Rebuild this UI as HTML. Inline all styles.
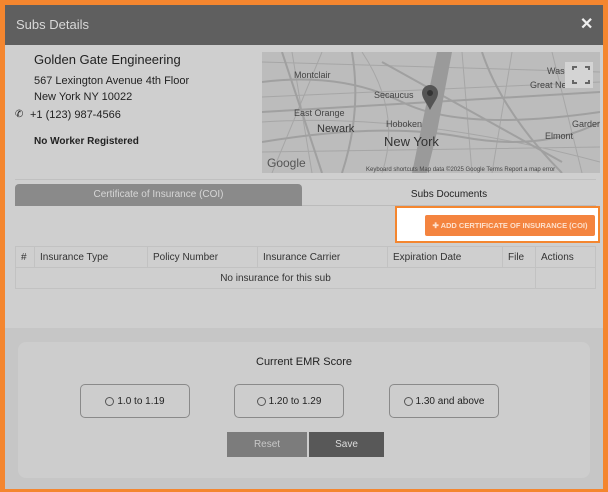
<!DOCTYPE html>
<html><head><meta charset="utf-8"><style>
*{box-sizing:border-box;margin:0;padding:0}
body{width:608px;height:492px;background:#f4862f;font-family:"Liberation Sans",sans-serif;position:relative;overflow:hidden}
.a{position:absolute}
.win{left:5px;top:5px;width:598px;height:484px;background:#cfcfcf}
.hdr{left:5px;top:5px;width:598px;height:40px;background:#5f5f5f;color:#d8d8d8;font-size:13px;padding:12px 0 0 11px}
.t{color:#222}
table{border-collapse:collapse;font-size:10px;color:#333}
td{border:1px solid #c2c2c2;height:21px;padding:0 5px}
.rb{border:1px solid #8a8a8a;border-radius:5px;font-size:10px;color:#222;display:flex;align-items:center;justify-content:center}
.rb span{display:inline-block;width:9px;height:9px;border:1px solid #555;border-radius:50%;margin-right:3px}
</style></head><body>
<div class="a win"></div>
<div class="a hdr">Subs Details</div>
<div class="a" style="left:580px;top:14px;color:#eee;font-size:16px;font-weight:bold">✕</div>
<div class="a t" style="left:34px;top:52px;font-size:13px">Golden Gate Engineering</div>
<div class="a t" style="left:34px;top:73px;font-size:11px;line-height:16px">567 Lexington Avenue 4th Floor<br>New York NY 10022</div>
<div class="a t" style="left:15px;top:109px;font-size:10px">✆</div>
<div class="a t" style="left:30px;top:109px;font-size:11px">+1 (123) 987-4566</div>
<div class="a t" style="left:34px;top:136px;font-size:10px;font-weight:bold">No Worker Registered</div>
<svg class="a" style="left:262px;top:52px" width="338" height="121" viewBox="0 0 338 121">
<rect width="338" height="121" fill="#bcbcbc"/>
<g stroke="#a6a6a6" stroke-width="1" fill="none">
<path d="M0 10 L338 20M0 45 L338 30M0 100 L338 95M30 0 L50 121M250 0 L230 121M290 0 L320 121M0 70 Q150 60 338 110M100 0 Q140 60 120 121M200 0 L210 121M60 0 L10 121"/></g>
<g stroke="#a0a0a0" stroke-width="2" fill="none">
<path d="M0 30 Q80 20 140 50 T338 60"/><path d="M20 0 L60 121"/><path d="M90 0 Q100 60 80 121"/><path d="M220 0 Q240 60 300 121"/><path d="M0 90 Q120 70 200 85 T338 70"/><path d="M120 10 L300 110"/><path d="M0 60 L338 40"/></g>
<path d="M175 0 L190 0 L175 80 L165 121 L150 121 Z" fill="#9a9a9a"/>
<g font-size="9" fill="#444"><text x="32" y="26">Montclair</text><text x="32" y="64">East Orange</text><text x="112" y="46">Secaucus</text><text x="124" y="75">Hoboken</text><text x="55" y="80" font-size="11" fill="#333">Newark</text><text x="122" y="94" font-size="13" fill="#333">New York</text><text x="285" y="22">Washi</text><text x="268" y="36">Great Neck</text><text x="283" y="87">Elmont</text><text x="310" y="75">Garden</text><text x="5" y="115" font-size="12" fill="#555">Google</text><text x="104" y="119" font-size="6">Keyboard shortcuts   Map data ©2025 Google   Terms   Report a map error</text></g>
<path d="M168 58 C164 50 160 46 160 41 A8 8 0 1 1 176 41 C176 46 172 50 168 58Z" fill="#555"/>
<circle cx="168" cy="41" r="3" fill="#333"/>
<rect x="303" y="10" width="28" height="26" fill="#d4d4d4"/>
<path d="M311 18v-3h4M323 15h4v3M327 28v3h-4M315 31h-4v-3" stroke="#666" stroke-width="2" fill="none"/>
</svg>
<div class="a" style="left:15px;top:179px;width:581px;border-top:1px solid #c0c0c0"></div>
<div class="a" style="left:15px;top:184px;width:287px;height:22px;background:#8a8a8a;border-radius:4px 4px 0 0;color:#d6d6d6;font-size:10px;text-align:center;line-height:22px">Certificate of Insurance (COI)</div>
<div class="a t" style="left:302px;top:184px;width:294px;height:22px;font-size:10px;text-align:center;line-height:22px;border-bottom:1px solid #bbb">Subs Documents</div>
<div class="a" style="left:395px;top:206px;width:205px;height:37px;background:#fff;border:2px solid #f4862f"></div>
<div class="a" style="left:425px;top:215px;width:170px;height:21px;background:#f4843f;border-radius:2px;color:#fde0cc;font-size:7.5px;font-weight:bold;line-height:21px;text-align:center">✚ ADD CERTIFICATE OF INSURANCE (COI)</div>
<table class="a" style="left:15px;top:246px;width:581px">
<tr><td style="width:19px">#</td><td style="width:113px">Insurance Type</td><td style="width:110px">Policy Number</td><td style="width:130px">Insurance Carrier</td><td style="width:115px">Expiration Date</td><td style="width:33px">File</td><td>Actions</td></tr>
<tr><td colspan="6" style="text-align:center">No insurance for this sub</td><td></td></tr></table>
<div class="a" style="left:5px;top:328px;width:598px;height:161px;background:#c6c6c6"></div>
<div class="a" style="left:18px;top:342px;width:572px;height:136px;background:#cdcdcd;border-radius:8px"></div>
<div class="a t" style="left:0;top:356px;width:608px;text-align:center;font-size:11px">Current EMR Score</div>
<div class="a rb" style="left:80px;top:384px;width:110px;height:34px"><span></span>1.0 to 1.19</div>
<div class="a rb" style="left:234px;top:384px;width:110px;height:34px"><span></span>1.20 to 1.29</div>
<div class="a rb" style="left:389px;top:384px;width:110px;height:34px"><span></span>1.30 and above</div>
<div class="a" style="left:227px;top:432px;width:80px;height:25px;background:#7c7c7c;color:#c8c8c8;font-size:10px;text-align:center;line-height:25px">Reset</div>
<div class="a" style="left:309px;top:432px;width:75px;height:25px;background:#585858;color:#ddd;font-size:10px;text-align:center;line-height:25px">Save</div>
</body></html>
